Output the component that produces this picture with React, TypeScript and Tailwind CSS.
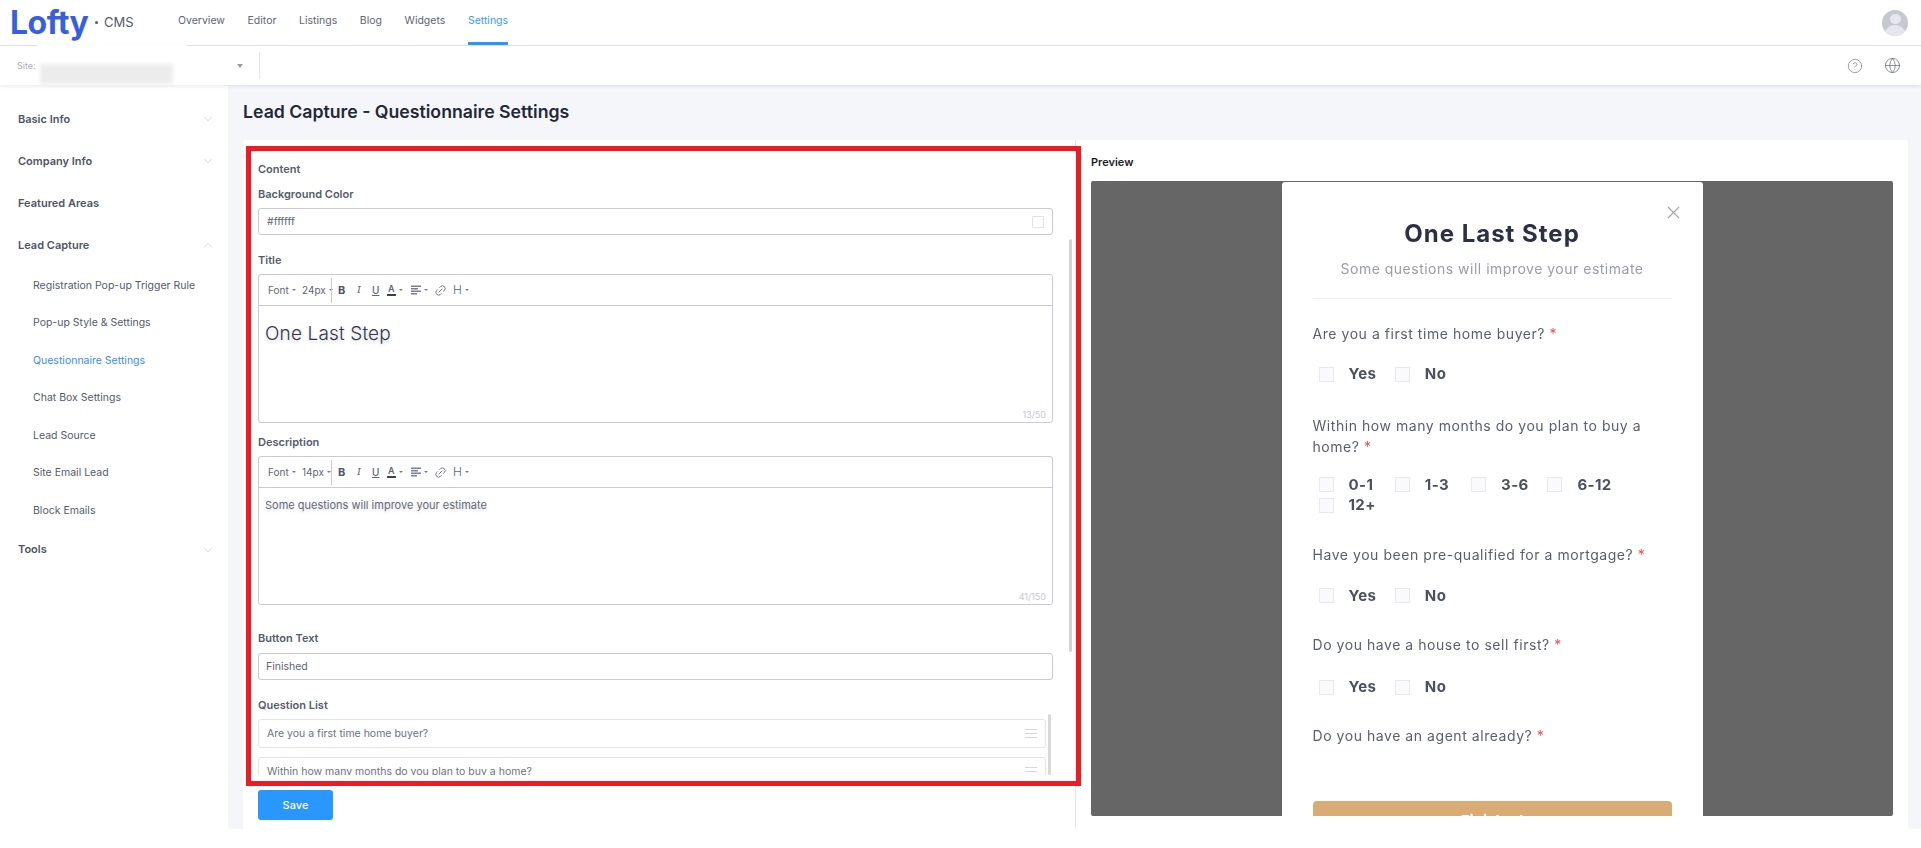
import React from "react";
import { ChevronDown, ChevronUp, CircleHelp, Globe, Link2, X } from "lucide-react";

const nav = ["Overview", "Editor", "Listings", "Blog", "Widgets", "Settings"];

function Head({ label, icon }: { label: string; icon?: "down" | "up" }) {
  return (
    <div className="flex h-[42px] items-center justify-between pl-[18px] pr-[13px] text-[11px] font-semibold text-[#4f5566]">
      <span>{label}</span>
      {icon === "down" && <ChevronDown size={14} strokeWidth={1} className="text-[#b8bcc6]" />}
      {icon === "up" && <ChevronUp size={14} strokeWidth={1} className="text-[#b8bcc6]" />}
    </div>
  );
}

function Sub({ label, active }: { label: string; active?: boolean }) {
  return (
    <div className={"flex h-[37.5px] items-center pl-[33px] text-[10.5px] " + (active ? "text-[#3b8df5]" : "text-[#555b68]")}>
      {label}
    </div>
  );
}

function Caret() {
  return <span className="ml-[3px] inline-block h-0 w-0 border-x-[2px] border-t-[2px] border-x-transparent border-t-[#777d8a]" />;
}

function Toolbar({ size }: { size: string }) {
  return (
    <div className="flex h-[31px] items-center border-b border-[#c9cad5] pl-[9px] text-[10px] text-[#5f6573]">
      <span className="flex w-[34px] items-center">Font<Caret /></span>
      <span className="flex w-[26px] items-center">{size}<Caret /></span>
      <span className="mx-[3px] h-[25px] w-px bg-[#c9cad5]" />
      <span className="ml-[3px] w-[19px] text-[11px] font-bold text-[#4f5566]">B</span>
      <span className="w-[15px] font-serif text-[11px] italic">I</span>
      <span className="w-[15px] text-[10px] font-medium underline">U</span>
      <span className="flex w-[24px] items-center">
        <span className="border-b-2 border-[#3a4050] px-[1px] text-[9px] font-semibold leading-[10px]">A</span>
        <Caret />
      </span>
      <span className="flex w-[23px] items-center">
        <svg width="10" height="10" viewBox="0 0 10 10" fill="#7a808d">
          <rect x="0" y="0.5" width="10" height="1.5" />
          <rect x="0" y="3" width="7" height="1.5" />
          <rect x="0" y="5.5" width="10" height="1.5" />
          <rect x="0" y="8" width="6" height="1.5" />
        </svg>
        <Caret />
      </span>
      <Link2 size={13} strokeWidth={1.5} className="-rotate-45" />
      <span className="ml-[6px] flex items-center text-[12px] font-light">H<Caret /></span>
    </div>
  );
}

function Editor({ size, count, children }: { size: string; count: string; children: React.ReactNode }) {
  return (
    <div className="relative mt-[5px] h-[149px] rounded-[3px] border border-[#c9cad5]">
      <Toolbar size={size} />
      {children}
      <span className="absolute bottom-[1px] right-[6px] text-[9px] text-[#c4c7cf]">{count}</span>
    </div>
  );
}

function Label({ children, className = "" }: { children: React.ReactNode; className?: string }) {
  return <div className={"flex h-[18px] items-center text-[11px] font-semibold text-[#565c6b] " + className}>{children}</div>;
}

function QuestionItem({ text, className = "" }: { text: string; className?: string }) {
  return (
    <div className={"flex h-[29px] shrink-0 items-center justify-between rounded-[3px] border border-[#e3e4e8] pl-[8px] pr-[8px] text-[10.5px] text-[#6c7280] " + className}>
      <span>{text}</span>
      <span className="flex w-[12px] flex-col gap-[3px]">
        <span className="h-px bg-[#d6d7da]" />
        <span className="h-px bg-[#d6d7da]" />
        <span className="h-px bg-[#d6d7da]" />
      </span>
    </div>
  );
}

function Question({ lines, className = "" }: { lines: string; className?: string }) {
  return (
    <div className={"text-[14px] leading-[21px] tracking-[0.55px] text-[#5a5f6d] " + className}>
      {lines} <span className="text-[#f04a5a]">*</span>
    </div>
  );
}

function Options({ items, className = "" }: { items: string[]; className?: string }) {
  return (
    <div className={"ml-[6px] flex flex-wrap " + className}>
      {items.map((o) => (
        <div key={o} className="flex h-[20.5px] w-[76.3px] items-center gap-[15px]">
          <span className="h-[15px] w-[15px] shrink-0 border border-[#e8e9ee] bg-[#fafafc]" />
          <span className="text-[15px] font-bold tracking-[0.4px] text-[#4c5161]">{o}</span>
        </div>
      ))}
    </div>
  );
}

export default function App() {
  return (
    <div className="flex h-[829px] flex-col overflow-hidden bg-white font-['Inter',sans-serif]">
      <header className="flex h-[46px] shrink-0 items-center border-b border-[#e6e7eb] pl-[10px] pr-[13px]">
        <span className="w-[85px] text-[32px] font-bold leading-none tracking-[-0.5px] text-[#3a5ee0]">Lofty</span>
        <span className="h-[3px] w-[3px] rounded-full bg-[#555b66]" />
        <span className="ml-[6px] w-[62px] text-[13px] text-[#555b66]">CMS</span>
        <nav className="ml-[12px] flex h-full gap-[22.6px]">
          {nav.map((n) => (
            <div
              key={n}
              className={
                "flex h-full items-center border-b-[3px] text-[10.5px] " +
                (n === "Settings" ? "border-[#2a96ff] text-[#3b96ff]" : "border-transparent text-[#5e6472]")
              }
            >
              {n}
            </div>
          ))}
        </nav>
        <div className="ml-auto flex h-[26px] w-[26px] items-end justify-center overflow-hidden rounded-full bg-[#c6c8d1]">
          <div className="relative flex h-[22px] w-[22px] flex-col items-center">
            <span className="h-[11px] w-[11px] rounded-full bg-[#e6e7ee]" />
            <span className="mt-[1px] h-[12px] w-[22px] rounded-t-full bg-[#e6e7ee]" />
          </div>
        </div>
      </header>

      <div className="relative z-10 flex h-[39px] shrink-0 items-center bg-white pl-[17px] pr-[20px] shadow-[0_1px_4px_rgba(40,50,80,0.12)]">
        <span className="w-[220px] text-[9px] text-[#a9adb8]">Site:</span>
        <span className="h-0 w-0 border-x-[3px] border-t-[4px] border-x-transparent border-t-[#9a9ea8]" />
        <span className="ml-[16px] h-[27px] w-px bg-[#e2e3e8]" />
        <CircleHelp size={16} strokeWidth={1} className="ml-auto text-[#6d7280]" />
        <Globe size={17} strokeWidth={1} className="ml-[21px] text-[#5f6573]" />
        <div className="absolute left-[38px] top-[-1px] h-[40px] w-[149px] bg-white">
          <div className="absolute left-[2px] top-[19px] h-[20px] w-[133px] bg-[#ececec] blur-[2px]" />
        </div>
      </div>

      <div className="flex min-h-0 flex-1">
        <aside className="w-[228px] shrink-0 bg-white pt-[13px] shadow-[1px_0_3px_rgba(40,50,80,0.06)]">
          <Head label="Basic Info" icon="down" />
          <Head label="Company Info" icon="down" />
          <Head label="Featured Areas" />
          <Head label="Lead Capture" icon="up" />
          <div className="-mb-[1px] pt-[1px]">
            <Sub label="Registration Pop-up Trigger Rule" />
            <Sub label="Pop-up Style & Settings" />
            <Sub label="Questionnaire Settings" active />
            <Sub label="Chat Box Settings" />
            <Sub label="Lead Source" />
            <Sub label="Site Email Lead" />
            <Sub label="Block Emails" />
          </div>
          <Head label="Tools" icon="down" />
        </aside>

        <main className="flex min-w-0 flex-1 flex-col bg-[#f4f6fa] pl-[15px] pr-[13px]">
          <div className="flex h-[55px] shrink-0 items-center text-[17.7px] font-semibold text-[#232838]">
            Lead Capture - Questionnaire Settings
          </div>
          <div className="flex min-h-0 flex-1 rounded-t-[3px] bg-white">
            <section className="relative w-[833px] shrink-0 border-r border-[#e6e7eb]">
              <div className="relative h-[641px] overflow-hidden pl-[15px] pr-[22px] pt-[20px]">
                <Label>Content</Label>
                <Label className="mt-[7px]">Background Color</Label>
                <div className="mt-[5px] flex h-[27px] items-center justify-between rounded-[3px] border border-[#c9cad5] pl-[8px] pr-[8px] text-[10.5px] text-[#5f6573]">
                  #ffffff
                  <span className="h-[12px] w-[12px] border border-[#e1e3e8]" />
                </div>
                <Label className="mt-[16px]">Title</Label>
                <Editor size="24px" count="13/50">
                  <div className="pl-[6px] pt-[16px] text-[19px] font-light leading-[24px] tracking-[0.15px] text-[#33384a] [text-shadow:0_2px_4px_rgba(0,0,0,0.2)]">
                    One Last Step
                  </div>
                </Editor>
                <Label className="mt-[10px]">Description</Label>
                <Editor size="14px" count="41/150">
                  <div className="pl-[6px] pt-[9px] text-[11px] leading-[16px] text-[#666b78] [text-shadow:0_2px_3px_rgba(0,0,0,0.15)]">
                    Some questions will improve your estimate
                  </div>
                </Editor>
                <Label className="mt-[24px]">Button Text</Label>
                <div className="mt-[6px] flex h-[27px] items-center rounded-[3px] border border-[#c9cad5] pl-[7px] text-[10.5px] text-[#5f6573]">
                  Finished
                </div>
                <Label className="mt-[16px]">Question List</Label>
                <div className="relative flex h-[61px] flex-col gap-[9px] overflow-hidden pr-[7px] pt-[5px]">
                  <QuestionItem text="Are you a first time home buyer?" />
                  <QuestionItem text="Within how many months do you plan to buy a home?" />
                  <span className="absolute right-[2px] top-0 h-full w-[3px] rounded-full bg-[#d9d9d9]" />
                </div>
                <span className="absolute right-[3px] top-[99px] h-[413px] w-[3px] rounded-full bg-[#d4d4d4]" />
              </div>
              <button className="ml-[15px] mt-[9px] h-[30px] w-[75px] rounded-[3px] bg-[#2a96ff] text-[11px] font-medium text-white">
                Save
              </button>
              <div className="pointer-events-none absolute left-[3px] top-[6px] h-[640px] w-[835px] border-[5px] border-[#ed1c24]" />
            </section>

            <section className="min-w-0 flex-1 pl-[15px] pr-[15px] pt-[13px]">
              <div className="mb-[10px] flex h-[18px] items-center text-[11px] font-semibold text-[#1b1e28]">Preview</div>
              <div className="flex h-[635px] justify-center overflow-hidden rounded-[2px] bg-[#666666]">
                <div className="relative mt-[1px] h-[700px] w-[421px] rounded-t-[3px] bg-white px-[31px] pt-[37px] blur-[0.4px]">
                  <X size={21} strokeWidth={1.4} className="absolute right-[19px] top-[20px] text-[#a6a6a6]" />
                  <div className="text-center text-[24px] font-bold leading-[30px] tracking-[1px] text-[#2b3044]">One Last Step</div>
                  <div className="mt-[10px] text-center text-[14px] leading-[20px] tracking-[0.5px] text-[#9a9da6]">
                    Some questions will improve your estimate
                  </div>
                  <div className="mt-[19px] h-px bg-[#eeeff2]" />
                  <Question lines="Are you a first time home buyer?" className="mt-[24px]" />
                  <Options items={["Yes", "No"]} className="mt-[20px]" />
                  <Question lines="Within how many months do you plan to buy a home?" className="mt-[30px]" />
                  <Options items={["0-1", "1-3", "3-6", "6-12", "12+"]} className="mt-[18px]" />
                  <Question lines="Have you been pre-qualified for a mortgage?" className="mt-[28px]" />
                  <Options items={["Yes", "No"]} className="mt-[21px]" />
                  <Question lines="Do you have a house to sell first?" className="mt-[28px]" />
                  <Options items={["Yes", "No"]} className="mt-[22px]" />
                  <Question lines="Do you have an agent already?" className="mt-[27px]" />
                  <div className="mt-[55px] flex h-[42px] items-center justify-center rounded-[4px] bg-[#d8ac74] text-[15px] font-bold text-white">
                    Finished
                  </div>
                </div>
              </div>
            </section>
          </div>
        </main>
      </div>
    </div>
  );
}
